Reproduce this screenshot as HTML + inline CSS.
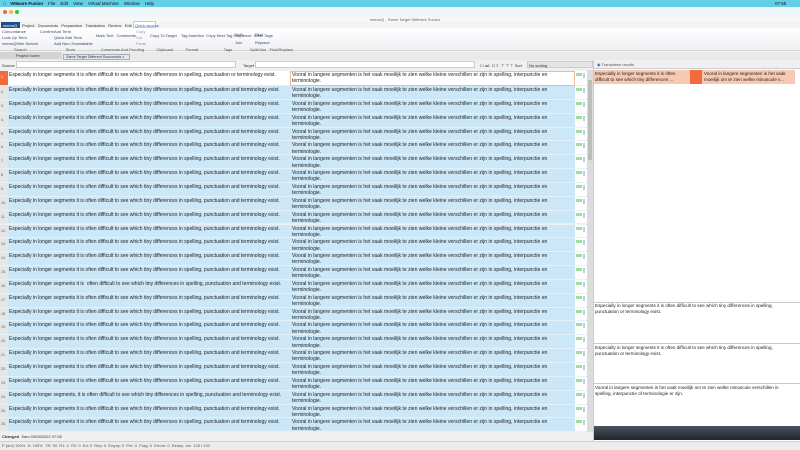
<!DOCTYPE html><html><head><meta charset="utf-8"><style>
*{margin:0;padding:0;box-sizing:border-box}
body{width:800px;height:450px;overflow:hidden;position:relative;font-family:"Liberation Sans",sans-serif;background:#f0f0f0;color:#222}
.a{position:absolute}
.t{font-size:4px;white-space:nowrap;color:#333}
.row{position:absolute;left:0;width:587px;height:13.85px;background:#cce8f8;border-bottom:1px solid #e2f1fa}
.n{position:absolute;left:0;top:0;width:8px;height:100%;background:#e6e6e6;font-size:3.5px;color:#555;padding:4px 0 0 1px}
.s{position:absolute;left:9px;top:1px;font-size:5px;white-space:nowrap}
.g{position:absolute;left:292px;top:1px;font-size:5.1px;line-height:6.3px;width:285px}
.st{position:absolute;left:575px;top:0;width:12px;height:100%;background:#fff}
.st i{position:absolute;left:1px;top:2px;width:6px;height:3px;background:#9ee09a}
.st b{position:absolute;left:8px;top:2px;width:2px;height:5px;background:#7bc;opacity:.6}
</style></head><body>
<div class="a" style="left:0;top:0;width:800px;height:7px;background:#62cfe6"></div>
<div class="a t" style="left:3px;top:1px;font-size:4.5px;color:#111">&#63743;&nbsp;&nbsp; <b>VMware Fusion</b>&nbsp;&nbsp;&nbsp; File&nbsp;&nbsp;&nbsp; Edit&nbsp;&nbsp;&nbsp; View&nbsp;&nbsp;&nbsp; Virtual Machine&nbsp;&nbsp;&nbsp; Window&nbsp;&nbsp;&nbsp; Help</div>
<div class="a t" style="left:775px;top:1px;font-size:4.5px;color:#111">07:55</div>
<div class="a" style="left:0;top:7px;width:800px;height:10px;background:#eef6f9"></div>
<div class="a" style="left:3px;top:10px;width:4px;height:4px;border-radius:2px;background:#f25f57"></div>
<div class="a" style="left:9px;top:10px;width:4px;height:4px;border-radius:2px;background:#f8bc2e"></div>
<div class="a" style="left:15px;top:10px;width:4px;height:4px;border-radius:2px;background:#2ac840"></div>
<div class="a" style="left:0;top:17px;width:800px;height:5px;background:#f7f7f7"></div>
<div class="a t" style="left:370px;top:17px;color:#666">memoQ - Same Target Different Source</div>
<div class="a" style="left:0;top:22px;width:800px;height:6px;background:#f3f3f3"></div>
<div class="a" style="left:1px;top:22px;width:19px;height:6px;background:#1e4f8c"></div>
<div class="a t" style="left:3px;top:23px;color:#fff">memoQ</div>
<div class="a t" style="left:22px;top:23px">Project&nbsp;&nbsp; Documents&nbsp;&nbsp; Preparation&nbsp;&nbsp; Translation&nbsp;&nbsp; Review&nbsp;&nbsp; Edit&nbsp;&nbsp; View</div>
<div class="a" style="left:133px;top:21px;width:23px;height:7px;background:#fff;border:1px solid #bcd"></div>
<div class="a t" style="left:135px;top:23px;color:#36a">Quick access</div>
<div class="a" style="left:0;top:28px;width:800px;height:23px;background:linear-gradient(#fff,#eef0f3);border-bottom:1px solid #d6d6d6"></div>
<div class="a t" style="left:2px;top:29px;line-height:6px;color:#446">Concordance<br>Look Up Term<br>memoQWeb Search</div>
<div class="a t" style="left:40px;top:29px;line-height:6px;color:#446">Confirm<br>&nbsp;</div>
<div class="a t" style="left:54px;top:29px;line-height:6px;color:#446">Add Term<br>Quick Add Term<br>Add Non-Translatable</div>
<div class="a t" style="left:96px;top:33px;color:#446">Mark Text &nbsp; Comments</div>
<div class="a t" style="left:136px;top:29px;line-height:6px;color:#999">Copy<br>Cut<br>Paste</div>
<div class="a t" style="left:150px;top:33px;color:#446">Copy To Target</div>
<div class="a t" style="left:181px;top:33px;color:#446">Tag Insertion&nbsp; Copy Next Tag Sequence&nbsp; Inline Tags</div>
<div class="a t" style="left:235px;top:31px;line-height:8px;color:#446">Split<br>Join</div>
<div class="a t" style="left:255px;top:31px;line-height:8px;color:#446">Find<br>Replace</div>
<div class="a t" style="left:14px;top:47px;color:#555">Search&nbsp;&nbsp;&nbsp;&nbsp;&nbsp;&nbsp;&nbsp;&nbsp;&nbsp;&nbsp;&nbsp;&nbsp;&nbsp;&nbsp;&nbsp;&nbsp;&nbsp;&nbsp;&nbsp;&nbsp;&nbsp;&nbsp;&nbsp;&nbsp;&nbsp;&nbsp;&nbsp;&nbsp;&nbsp;&nbsp;&nbsp;&nbsp;&nbsp;&nbsp; Store&nbsp;&nbsp;&nbsp;&nbsp;&nbsp;&nbsp;&nbsp;&nbsp;&nbsp;&nbsp;&nbsp;&nbsp;&nbsp;&nbsp;&nbsp;&nbsp;&nbsp;&nbsp;&nbsp;&nbsp;&nbsp;&nbsp; Comments And Proofing&nbsp;&nbsp;&nbsp;&nbsp;&nbsp;&nbsp;&nbsp;&nbsp;&nbsp;&nbsp; Clipboard&nbsp;&nbsp;&nbsp;&nbsp;&nbsp;&nbsp;&nbsp;&nbsp;&nbsp;&nbsp; Format&nbsp;&nbsp;&nbsp;&nbsp;&nbsp;&nbsp;&nbsp;&nbsp;&nbsp;&nbsp;&nbsp;&nbsp;&nbsp;&nbsp;&nbsp;&nbsp;&nbsp;&nbsp;&nbsp;&nbsp;&nbsp;&nbsp; Tags&nbsp;&nbsp;&nbsp;&nbsp;&nbsp;&nbsp;&nbsp;&nbsp;&nbsp;&nbsp;&nbsp;&nbsp;&nbsp;&nbsp;&nbsp; Split/Join&nbsp;&nbsp; Find/Replace</div>
<div class="a" style="left:0;top:52px;width:800px;height:8px;background:#eaeaea"></div>
<div class="a" style="left:0;top:52px;width:62px;height:7px;background:#d4d4d4"></div>
<div class="a t" style="left:16px;top:53px">Project home</div>
<div class="a" style="left:63px;top:54px;width:67px;height:6px;background:#dfe8f3;border:1px solid #aab"></div>
<div class="a t" style="left:66px;top:55px;font-size:3.7px">Same Target Different Sourcecuts ×</div>
<div class="a" style="left:0;top:60px;width:593px;height:10px;background:#f0f0f0"></div>
<div class="a t" style="left:2px;top:63px">Source</div>
<div class="a" style="left:16px;top:61px;width:220px;height:7px;background:#fff;border:1px solid #ccc"></div>
<div class="a t" style="left:243px;top:63px">Target</div>
<div class="a" style="left:255px;top:61px;width:220px;height:7px;background:#fff;border:1px solid #ccc"></div>
<div class="a t" style="left:480px;top:63px">☐ aA &nbsp;☐ ≡&nbsp; ⊤ ⊤ ⊤ Sort</div>
<div class="a" style="left:527px;top:61px;width:66px;height:7px;background:#e4e4e4;border:1px solid #ccc"></div>
<div class="a t" style="left:529px;top:63px">No sorting</div>
<div class="a" style="left:587px;top:70px;width:6px;height:365px;background:#dcdcdc"></div>
<div class="a" style="left:588px;top:80px;width:4px;height:80px;background:#bdbdbd"></div>

<div class="row" style="top:71px;height:15px;background:#fff"><div class="n" style="background:#f26b3a;color:#fff">1.</div><div class="s">Especially in longer segments it is often difficult to see which tiny differences in spelling, punctuation or terminology exist.</div><div class="a" style="left:290px;top:0;width:285px;height:15px;border:1px solid #f0b8a0"></div><div class="g">Vooral in langere segmenten is het vaak moeilijk te zien welke kleine verschillen er zijn in spelling, interpunctie en terminologie.</div><div class="st"><i></i><b></b></div></div>

<div class="row" style="top:86px"><div class="n">2.</div><div class="s">Especially in longer segments it is often difficult to see which tiny differences in spelling, punctuation and terminology exist.</div><div class="g">Vooral in langere segmenten is het vaak moeilijk te zien welke kleine verschillen er zijn in spelling, interpunctie en terminologie.</div><div class="st"><i></i><b></b></div></div>
<div class="row" style="top:99.85px"><div class="n">3.</div><div class="s">Especially in longer segments it is often difficult to see which tiny differences in spelling, punctuation and terminology exist.</div><div class="g">Vooral in langere segmenten is het vaak moeilijk te zien welke kleine verschillen er zijn in spelling, interpunctie en terminologie.</div><div class="st"><i></i><b></b></div></div>
<div class="row" style="top:113.7px"><div class="n">4.</div><div class="s">Especially in longer segments it is often difficult to see which tiny differences in spelling, punctuation and terminology exist.</div><div class="g">Vooral in langere segmenten is het vaak moeilijk te zien welke kleine verschillen er zijn in spelling, interpunctie en terminologie.</div><div class="st"><i></i><b></b></div></div>
<div class="row" style="top:127.55px"><div class="n">5.</div><div class="s">Especially in longer segments it is often difficult to see which tiny differences in spelling, punctuation and terminology exist.</div><div class="g">Vooral in langere segmenten is het vaak moeilijk te zien welke kleine verschillen er zijn in spelling, interpunctie en terminologie.</div><div class="st"><i></i><b></b></div></div>
<div class="row" style="top:141.4px"><div class="n">6.</div><div class="s">Especially in longer segments it is often difficult to see which tiny differences in spelling, punctuation and terminology exist.</div><div class="g">Vooral in langere segmenten is het vaak moeilijk te zien welke kleine verschillen er zijn in spelling, interpunctie en terminologie.</div><div class="st"><i></i><b></b></div></div>
<div class="row" style="top:155.25px"><div class="n">7.</div><div class="s">Especially in longer segments it is often difficult to see which tiny differences in spelling, punctuation and terminology exist.</div><div class="g">Vooral in langere segmenten is het vaak moeilijk te zien welke kleine verschillen er zijn in spelling, interpunctie en terminologie.</div><div class="st"><i></i><b></b></div></div>
<div class="row" style="top:169.1px"><div class="n">8.</div><div class="s">Especially in longer segments it is often difficult to see which tiny differences in spelling, punctuation and terminology exist.</div><div class="g">Vooral in langere segmenten is het vaak moeilijk te zien welke kleine verschillen er zijn in spelling, interpunctie en terminologie.</div><div class="st"><i></i><b></b></div></div>
<div class="row" style="top:182.95px"><div class="n">9.</div><div class="s">Especially in longer segments it is often difficult to see which tiny differences in spelling, punctuation and terminology exist.</div><div class="g">Vooral in langere segmenten is het vaak moeilijk te zien welke kleine verschillen er zijn in spelling, interpunctie en terminologie.</div><div class="st"><i></i><b></b></div></div>
<div class="row" style="top:196.8px"><div class="n">10.</div><div class="s">Especially in longer segments it is often difficult to see which tiny differences in spelling, punctuation and terminology exist.</div><div class="g">Vooral in langere segmenten is het vaak moeilijk te zien welke kleine verschillen er zijn in spelling, interpunctie en terminologie.</div><div class="st"><i></i><b></b></div></div>
<div class="row" style="top:210.65px"><div class="n">11.</div><div class="s">Especially in longer segments it is often difficult to see which tiny differences in spelling, punctuation and terminology exist.</div><div class="g">Vooral in langere segmenten is het vaak moeilijk te zien welke kleine verschillen er zijn in spelling, interpunctie en terminologie.</div><div class="st"><i></i><b></b></div></div>
<div class="row" style="top:224.5px"><div class="n">12.</div><div class="s">Especially in longer segments it is often difficult to see which tiny differences in spelling, punctuation and terminology exist.</div><div class="g">Vooral in langere segmenten is het vaak moeilijk te zien welke kleine verschillen er zijn in spelling, interpunctie en terminologie.</div><div class="st"><i></i><b></b></div></div>
<div class="row" style="top:238.35px"><div class="n">13.</div><div class="s">Especially in longer segments it is often difficult to see which tiny differences in spelling, punctuation and terminology exist.</div><div class="g">Vooral in langere segmenten is het vaak moeilijk te zien welke kleine verschillen er zijn in spelling, interpunctie en terminologie.</div><div class="st"><i></i><b></b></div></div>
<div class="row" style="top:252.2px"><div class="n">14.</div><div class="s">Especially in longer segments it is often difficult to see which tiny differences in spelling, punctuation and terminology exist.</div><div class="g">Vooral in langere segmenten is het vaak moeilijk te zien welke kleine verschillen er zijn in spelling, interpunctie en terminologie.</div><div class="st"><i></i><b></b></div></div>
<div class="row" style="top:266.05px"><div class="n">15.</div><div class="s">Especially in longer segments it is often difficult to see which tiny differences in spelling, punctuation and terminology exist.</div><div class="g">Vooral in langere segmenten is het vaak moeilijk te zien welke kleine verschillen er zijn in spelling, interpunctie en terminologie.</div><div class="st"><i></i><b></b></div></div>
<div class="row" style="top:279.9px"><div class="n">16.</div><div class="s">Especially in longer segments it is&nbsp; often difficult to see which tiny differences in spelling, punctuation and terminology exist.</div><div class="g">Vooral in langere segmenten is het vaak moeilijk te zien welke kleine verschillen er zijn in spelling, interpunctie en terminologie.</div><div class="st"><i></i><b></b></div></div>
<div class="row" style="top:293.75px"><div class="n">17.</div><div class="s">Especially in longer segments it is often difficult to see which tiny differences in spelling, punctuation and terminology exist.</div><div class="g">Vooral in langere segmenten is het vaak moeilijk te zien welke kleine verschillen er zijn in spelling, interpunctie en terminologie.</div><div class="st"><i></i><b></b></div></div>
<div class="row" style="top:307.6px"><div class="n">18.</div><div class="s">Especially in longer segments it is often difficult to see which tiny differences in spelling, punctuation and terminology exist.</div><div class="g">Vooral in langere segmenten is het vaak moeilijk te zien welke kleine verschillen er zijn in spelling, interpunctie en terminologie.</div><div class="st"><i></i><b></b></div></div>
<div class="row" style="top:321.45px"><div class="n">19.</div><div class="s">Especially in longer segments it is often difficult to see which tiny differences in spelling, punctuation and terminology exist.</div><div class="g">Vooral in langere segmenten is het vaak moeilijk te zien welke kleine verschillen er zijn in spelling, interpunctie en terminologie.</div><div class="st"><i></i><b></b></div></div>
<div class="row" style="top:335.3px"><div class="n">20.</div><div class="s">Especially in longer segments it is often difficult to see which tiny differences in spelling, punctuation and terminology exist.</div><div class="g">Vooral in langere segmenten is het vaak moeilijk te zien welke kleine verschillen er zijn in spelling, interpunctie en terminologie.</div><div class="st"><i></i><b></b></div></div>
<div class="row" style="top:349.15px"><div class="n">21.</div><div class="s">Especially in longer segments it is often difficult to see which tiny differences in spelling, punctuation and terminology exist.</div><div class="g">Vooral in langere segmenten is het vaak moeilijk te zien welke kleine verschillen er zijn in spelling, interpunctie en terminologie.</div><div class="st"><i></i><b></b></div></div>
<div class="row" style="top:363px"><div class="n">22.</div><div class="s">Especially in longer segments it is often difficult to see which tiny differences in spelling, punctuation and terminology exist.</div><div class="g">Vooral in langere segmenten is het vaak moeilijk te zien welke kleine verschillen er zijn in spelling, interpunctie en terminologie.</div><div class="st"><i></i><b></b></div></div>
<div class="row" style="top:376.85px"><div class="n">23.</div><div class="s">Especially in longer segments it is often difficult to see which tiny differences in spelling, punctuation and terminology exist.</div><div class="g">Vooral in langere segmenten is het vaak moeilijk te zien welke kleine verschillen er zijn in spelling, interpunctie en terminologie.</div><div class="st"><i></i><b></b></div></div>
<div class="row" style="top:390.7px"><div class="n">24.</div><div class="s">Especially in longer segments, it is often difficult to see which tiny differences in spelling, punctuation and terminology exist.</div><div class="g">Vooral in langere segmenten is het vaak moeilijk te zien welke kleine verschillen er zijn in spelling, interpunctie en terminologie.</div><div class="st"><i></i><b></b></div></div>
<div class="row" style="top:404.55px"><div class="n">25.</div><div class="s">Especially in longer segments it is often difficult to see which tiny differences in spelling, punctuation and terminology exist.</div><div class="g">Vooral in langere segmenten is het vaak moeilijk te zien welke kleine verschillen er zijn in spelling, interpunctie en terminologie.</div><div class="st"><i></i><b></b></div></div>
<div class="row" style="top:418.4px"><div class="n">26.</div><div class="s">Especially in longer segments it is often difficult to see which tiny differences in spelling, punctuation and terminology exist.</div><div class="g">Vooral in langere segmenten is het vaak moeilijk te zien welke kleine verschillen er zijn in spelling, interpunctie en terminologie.</div><div class="st"><i></i><b></b></div></div>

<div class="a" style="left:0;top:432px;width:593px;height:9px;background:#f0f0f0"></div>
<div class="a t" style="left:2px;top:434px"><b>Changed</b> &nbsp;Sam 03/09/2022 07:55</div>
<div class="a" style="left:0;top:441px;width:800px;height:9px;background:#ececec;border-top:1px solid #d0d0d0"></div>
<div class="a t" style="left:2px;top:443px;color:#555">P (dut) 100% &nbsp;D: 100% &nbsp;TR: 90 &nbsp;R1: 0 &nbsp;R2: 0 &nbsp;Ed: 0 &nbsp;Rep: 0 &nbsp;Empty: 0 &nbsp;Pre: 0 &nbsp;Frag: 0 &nbsp;Errors: 0 &nbsp;Ready &nbsp;Ins &nbsp;128 / 132</div>

<div class="a" style="left:593px;top:60px;width:207px;height:381px;background:#fff;border-left:1px solid #ccc"></div>
<div class="a" style="left:594px;top:60px;width:206px;height:9px;background:#eef0f4;border-bottom:1px solid #ccc"></div>
<div class="a t" style="left:597px;top:62px;color:#555"><span style="color:#35a">◉</span> Translation results</div>
<div class="a" style="left:594px;top:70px;width:201px;height:14px;background:#f7c9b3"></div>
<div class="a" style="left:690px;top:70px;width:12px;height:14px;background:#f26b3a"></div>
<div class="a t" style="left:595px;top:71px;font-size:4.6px;line-height:5.5px;color:#222">Especially in longer segments it is often<br>difficult to see which tiny differences ...</div>
<div class="a t" style="left:704px;top:71px;font-size:4.6px;line-height:5.5px;color:#222">Vooral in langere segmenten is het vaak<br>moeilijk om te zien welke minuscule v...</div>
<div class="a" style="left:594px;top:302px;width:206px;height:40px;border-top:1px solid #c8c8c8"></div>
<div class="a t" style="left:595px;top:303px;font-size:4.6px;line-height:5.5px;color:#222">Especially in longer segments it is often difficult to see which tiny differences in spelling,<br>punctuation or terminology exist.</div>
<div class="a" style="left:594px;top:343px;width:206px;height:40px;border-top:1px solid #c8c8c8"></div>
<div class="a t" style="left:595px;top:345px;font-size:4.6px;line-height:5.5px;color:#222">Especially in longer segments it is often difficult to see which tiny differences in spelling,<br>punctuation or terminology exist.</div>
<div class="a" style="left:594px;top:383px;width:206px;height:43px;border-top:1px solid #c8c8c8"></div>
<div class="a t" style="left:595px;top:385px;font-size:4.6px;line-height:5.5px;color:#222">Vooral in langere segmenten is het vaak moeilijk om te zien welke minuscule verschillen in<br>spelling, interpunctie of terminologie er zijn.</div>
<div class="a" style="left:594px;top:426px;width:206px;height:14px;background:linear-gradient(#4a5561,#1d242c)"></div>
</body></html>
